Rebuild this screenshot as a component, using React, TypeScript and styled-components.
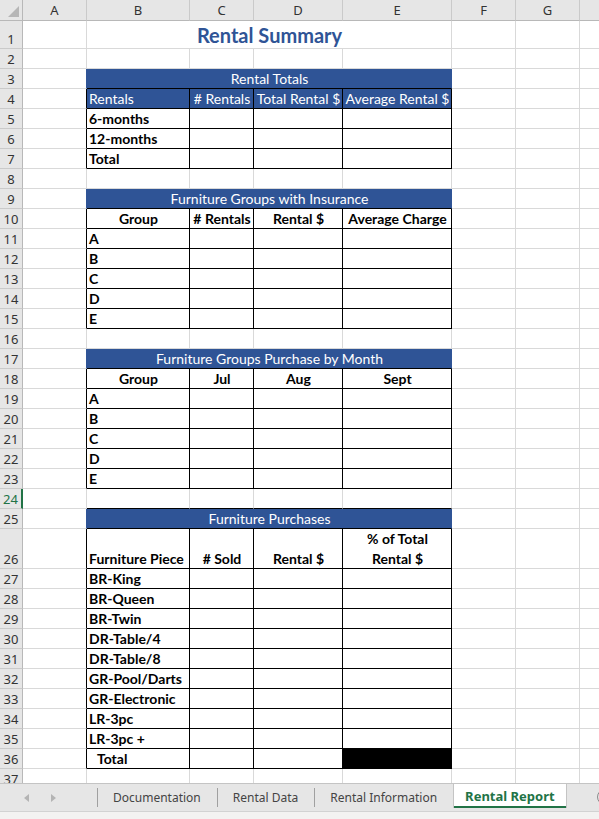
import React from "react";
import styled, { createGlobalStyle } from "styled-components";

const BLUE = "#2f5496";
const GRID = "#d9d9d9";
const INK = "#000";
const GREEN = "#217346";
const COLS = "23px 64px 103px 64px 89px 109px 64px 64px 64px";
const LETTERS = ["A", "B", "C", "D", "E", "F", "G", ""];

const GlobalStyle = createGlobalStyle`
  html, body { margin: 0; padding: 0; background: #fff; }
  body { font-family: Lato, "Liberation Sans", sans-serif; }
`;

const Window = styled.div`
  width: 599px;
  height: 819px;
  display: flex;
  flex-direction: column;
  overflow: hidden;
  background: #fff;
`;

const Sheet = styled.div`
  flex: 1;
  min-height: 0;
  overflow: hidden;
`;

const Row = styled.div<{ $h?: number }>`
  display: grid;
  grid-template-columns: ${COLS};
  height: ${(p) => p.$h ?? 20}px;
`;

const ColHead = styled.div`
  box-sizing: border-box;
  background: #e6e6e6;
  border-right: 1px solid #cacaca;
  border-bottom: 1px solid #b8b8b8;
  font-family: "Noto Sans", "Open Sans", sans-serif;
  font-size: 13px;
  color: #333;
  display: flex;
  align-items: center;
  justify-content: center;
`;

const Corner = styled(ColHead)`
  border-right-color: #b8b8b8;
  align-items: flex-end;
  justify-content: flex-end;
  padding: 0 3px 3px 0;
`;

const RowNum = styled.div<{ $active?: boolean }>`
  box-sizing: border-box;
  background: #e6e6e6;
  border-right: ${(p) => (p.$active ? `2px solid ${GREEN}` : "1px solid #b8b8b8")};
  border-bottom: 1px solid #cacaca;
  font-family: "Noto Sans", "Open Sans", sans-serif;
  font-size: 13px;
  line-height: 18px;
  color: ${(p) => (p.$active ? GREEN : "#333")};
  display: flex;
  align-items: flex-end;
  justify-content: center;
`;

type CellProps = {
  $span?: number;
  $fill?: string;
  $right?: string;
  $bottom?: string;
  $center?: boolean;
  $bold?: boolean;
  $color?: string;
  $indent?: number;
};

const Cell = styled.div<CellProps>`
  grid-column: span ${(p) => p.$span ?? 1};
  box-sizing: border-box;
  min-width: 0;
  background: ${(p) => p.$fill ?? "#fff"};
  border-right: 1px solid ${(p) => p.$right ?? GRID};
  border-bottom: 1px solid ${(p) => p.$bottom ?? GRID};
  display: flex;
  align-items: flex-end;
  justify-content: ${(p) => (p.$center ? "center" : "flex-start")};
  text-align: ${(p) => (p.$center ? "center" : "left")};
  padding: 0 1px 0 ${(p) => 2 + (p.$indent ?? 0)}px;
  font-size: 14px;
  line-height: 18px;
  font-weight: ${(p) => (p.$bold ? 700 : 400)};
  color: ${(p) => p.$color ?? INK};
  white-space: nowrap;
  overflow: hidden;
`;

const TitleCell = styled(Cell)`
  font-size: 20px;
  line-height: 25px;
`;

const TwoLine = styled.span`
  line-height: 20px;
  margin-bottom: -1px;
`;

const TabBar = styled.div`
  flex: none;
  height: 29px;
  box-sizing: border-box;
  border-top: 1px solid #c4c4c4;
  border-bottom: 1px solid #d2d2d2;
  background: #e6e6e6;
  display: flex;
  align-items: flex-start;
  font-family: "Noto Sans", "Open Sans", sans-serif;
  font-size: 12px;
  color: #444;
  overflow: hidden;
`;

const Nav = styled.div`
  flex: none;
  width: 97px;
  height: 27px;
  box-sizing: border-box;
  padding-left: 24px;
  display: flex;
  align-items: center;
  gap: 22px;
`;

const Divider = styled.span`
  flex: none;
  width: 1px;
  height: 19px;
  margin-top: 4px;
  background: #a0a0a0;
`;

const Tab = styled.div<{ $active?: boolean }>`
  flex: none;
  height: ${(p) => (p.$active ? 24 : 26)}px;
  box-sizing: border-box;
  display: flex;
  align-items: center;
  padding: ${(p) => (p.$active ? "0 11px 1px" : "0 16px 0 15px")};
  white-space: nowrap;
  background: ${(p) => (p.$active ? "#fff" : "transparent")};
  border-left: ${(p) => (p.$active ? "1px solid #c4c4c4" : "none")};
  border-right: ${(p) => (p.$active ? "1px solid #c4c4c4" : "none")};
  box-shadow: ${(p) => (p.$active ? `inset 0 -2px 0 ${GREEN}` : "none")};
  color: ${(p) => (p.$active ? GREEN : "#444")};
  font-size: ${(p) => (p.$active ? 13 : 12)}px;
  font-weight: ${(p) => (p.$active ? 700 : 400)};
`;

const AddSheet = styled.div`
  flex: none;
  width: 16px;
  height: 16px;
  margin: 5px 0 0 30px;
  box-sizing: border-box;
  border: 1px solid #8a8a8a;
  border-radius: 50%;
`;

const StatusBar = styled.div`
  flex: none;
  height: 7px;
  background: #f3f2f1;
  padding-left: 56px;
  overflow: hidden;
`;

type Head = { t: React.ReactNode; left?: boolean };
type RowDef =
  | { kind: "blank"; edge?: boolean; active?: boolean }
  | { kind: "title"; text: string; h: number }
  | { kind: "band"; text: string }
  | { kind: "header"; cells: Head[]; filled?: boolean; h?: number }
  | { kind: "body"; label: string; indent?: number; darkLast?: boolean };

const blank: RowDef = { kind: "blank" };
const body = (label: string): RowDef => ({ kind: "body", label });
const groups = ["A", "B", "C", "D", "E"].map(body);

const rows: RowDef[] = [
  { kind: "title", text: "Rental Summary", h: 28 },
  blank,
  { kind: "band", text: "Rental Totals" },
  {
    kind: "header",
    filled: true,
    cells: [{ t: "Rentals", left: true }, { t: "# Rentals" }, { t: "Total Rental $" }, { t: "Average Rental $" }],
  },
  body("6-months"),
  body("12-months"),
  body("Total"),
  blank,
  { kind: "band", text: "Furniture Groups with Insurance" },
  { kind: "header", cells: [{ t: "Group" }, { t: "# Rentals" }, { t: "Rental $" }, { t: "Average Charge" }] },
  ...groups,
  blank,
  { kind: "band", text: "Furniture Groups Purchase by Month" },
  { kind: "header", cells: [{ t: "Group" }, { t: "Jul" }, { t: "Aug" }, { t: "Sept" }] },
  ...groups,
  { kind: "blank", edge: true, active: true },
  { kind: "band", text: "Furniture Purchases" },
  {
    kind: "header",
    h: 40,
    cells: [
      { t: "Furniture Piece", left: true },
      { t: "# Sold" },
      { t: "Rental $" },
      { t: <TwoLine>% of Total<br />Rental $</TwoLine> },
    ],
  },
  ...["BR-King", "BR-Queen", "BR-Twin", "DR-Table/4", "DR-Table/8", "GR-Pool/Darts", "GR-Electronic", "LR-3pc", "LR-3pc +"].map(body),
  { kind: "body", label: "Total", indent: 8, darkLast: true },
  blank,
];

function Rest() {
  return (
    <>
      <Cell />
      <Cell />
      <Cell />
    </>
  );
}

function Arrow({ dir }: { dir: "l" | "r" }) {
  return (
    <svg width="5" height="8" viewBox="0 0 5 8">
      <polygon points={dir === "l" ? "5,0 5,8 0,4" : "0,0 0,8 5,4"} fill="#b4b4b4" />
    </svg>
  );
}

function SheetRow({ def, n }: { def: RowDef; n: number }) {
  const active = def.kind === "blank" && def.active;
  const h = def.kind === "title" || def.kind === "header" ? def.h : undefined;
  let content: React.ReactNode;

  switch (def.kind) {
    case "blank":
      content = (
        <>
          <Cell />
          {[0, 1, 2, 3].map((i) => (
            <Cell key={i} $bottom={def.edge ? INK : undefined} />
          ))}
          <Rest />
        </>
      );
      break;
    case "title":
      content = (
        <>
          <Cell />
          <TitleCell $span={4} $center $bold $color={BLUE}>
            {def.text}
          </TitleCell>
          <Rest />
        </>
      );
      break;
    case "band":
      content = (
        <>
          <Cell $right={BLUE} />
          <Cell $span={4} $center $fill={BLUE} $right={BLUE} $bottom={INK} $color="#fff">
            {def.text}
          </Cell>
          <Rest />
        </>
      );
      break;
    case "header":
      content = (
        <>
          <Cell $right={INK} />
          {def.cells.map((c, i) => (
            <Cell
              key={i}
              $right={INK}
              $bottom={INK}
              $center={!c.left}
              $fill={def.filled ? BLUE : undefined}
              $color={def.filled ? "#fff" : INK}
              $bold={!def.filled}
            >
              {c.t}
            </Cell>
          ))}
          <Rest />
        </>
      );
      break;
    case "body":
      content = (
        <>
          <Cell $right={INK} />
          <Cell $right={INK} $bottom={INK} $bold $indent={def.indent}>
            {def.label}
          </Cell>
          <Cell $right={INK} $bottom={INK} />
          <Cell $right={INK} $bottom={INK} />
          <Cell $right={INK} $bottom={INK} $fill={def.darkLast ? INK : undefined} />
          <Rest />
        </>
      );
      break;
  }

  return (
    <Row $h={h}>
      <RowNum $active={active}>{n}</RowNum>
      {content}
    </Row>
  );
}

export default function App() {
  return (
    <Window>
      <GlobalStyle />
      <Sheet>
        <Row $h={21}>
          <Corner>
            <svg width="11" height="11" viewBox="0 0 11 11">
              <polygon points="11,0 11,11 0,11" fill="#b6b6b6" />
            </svg>
          </Corner>
          {LETTERS.map((l, i) => (
            <ColHead key={i}>{l}</ColHead>
          ))}
        </Row>
        {rows.map((r, i) => (
          <SheetRow key={i} def={r} n={i + 1} />
        ))}
      </Sheet>
      <TabBar>
        <Nav>
          <Arrow dir="l" />
          <Arrow dir="r" />
        </Nav>
        <Divider />
        <Tab>Documentation</Tab>
        <Divider />
        <Tab>Rental Data</Tab>
        <Divider />
        <Tab>Rental Information</Tab>
        <Tab $active>Rental Report</Tab>
        <AddSheet />
      </TabBar>
      <StatusBar>
        <svg width="12" height="7" viewBox="0 0 12 7">
          <path d="M3 0 L3 3 L9 3 L9 0" fill="none" stroke="#555" strokeWidth="1" />
        </svg>
      </StatusBar>
    </Window>
  );
}
